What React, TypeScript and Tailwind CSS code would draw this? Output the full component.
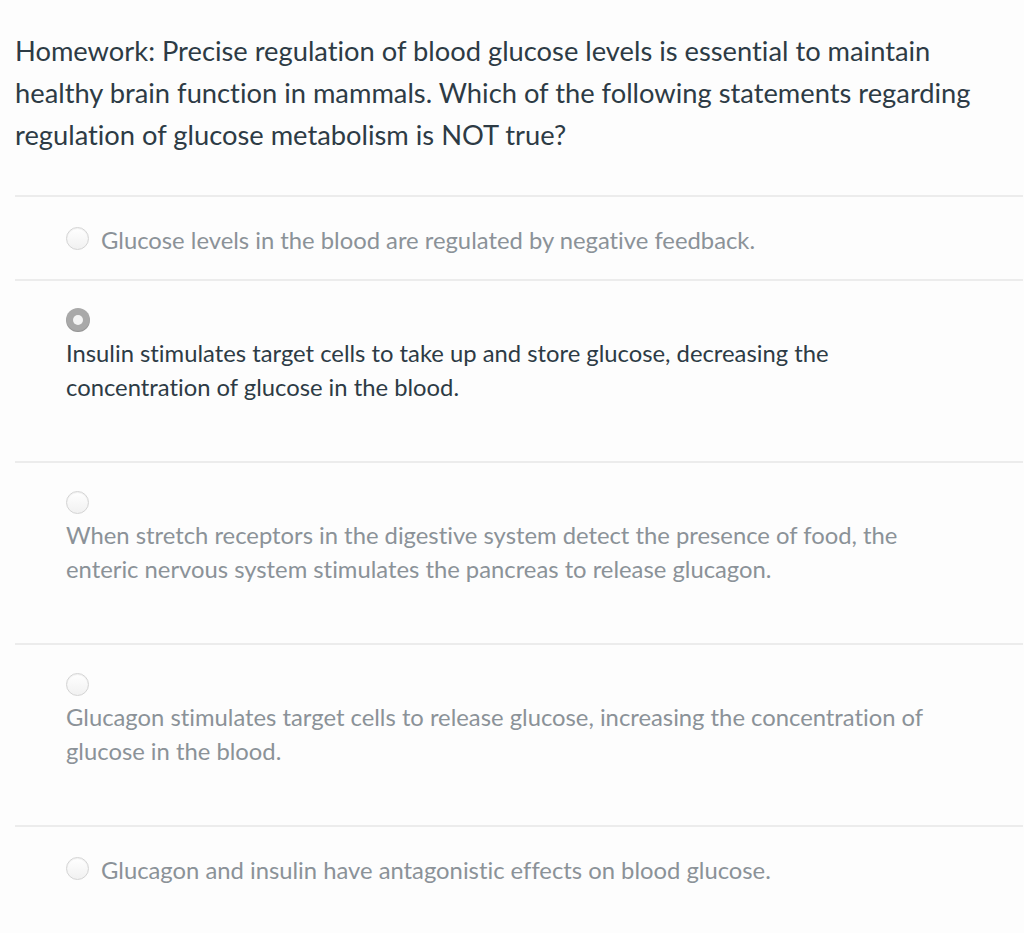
import React from "react";

type Opt = { text: string; stacked: boolean; selected?: boolean };

const options: Opt[] = [
  { text: "Glucose levels in the blood are regulated by negative feedback.", stacked: false },
  {
    text: "Insulin stimulates target cells to take up and store glucose, decreasing the concentration of glucose in the blood.",
    stacked: true,
    selected: true,
  },
  {
    text: "When stretch receptors in the digestive system detect the presence of food, the enteric nervous system stimulates the pancreas to release glucagon.",
    stacked: true,
  },
  {
    text: "Glucagon stimulates target cells to release glucose, increasing the concentration of glucose in the blood.",
    stacked: true,
  },
  { text: "Glucagon and insulin have antagonistic effects on blood glucose.", stacked: false },
];

function Radio({ selected }: { selected?: boolean }) {
  if (selected) {
    return (
      <div className="w-[24px] h-[24px] rounded-full bg-[#a9a9a9] flex items-center justify-center shrink-0 shadow-[inset_0_-1px_1px_rgba(0,0,0,0.15)]">
        <div className="w-[10px] h-[10px] rounded-full bg-[#f4f4f4]" />
      </div>
    );
  }
  return (
    <div className="w-[23px] h-[23px] rounded-full border border-[#d4d4d4] bg-gradient-to-b from-[#ffffff] to-[#f1f1f1] shrink-0 shadow-[inset_0_1px_1px_rgba(0,0,0,0.06)]" />
  );
}

export default function App() {
  return (
    <div
      className="min-h-[933px] w-[1024px] bg-[#fdfdfd] pl-[15px] pr-[1px] pt-[30px] [font-variant-ligatures:none]"
      style={{ fontFamily: "Lato, 'Open Sans', sans-serif" }}
    >
      <div className="w-[985px] text-[27.3px] leading-[42px] text-[#2d3b45] pb-[39px]">
        Homework: Precise regulation of blood glucose levels is essential to maintain healthy brain function in mammals. Which of the following statements regarding regulation of glucose metabolism is NOT true?
      </div>
      {options.map((o, i) => (
        <div key={i} className="border-t-2 border-[#ececec]">
          {o.stacked ? (
            <div className="pl-[51px] pt-[27px] pb-[57px]">
              <div className="h-[24px] flex items-center">
                <Radio selected={o.selected} />
              </div>
              <div
                className={`mt-[4px] w-[875px] text-[23.8px] leading-[34px] ${
                  o.selected ? "text-[#2d3b45]" : "text-[#8b9298]"
                }`}
              >
                {o.text}
              </div>
            </div>
          ) : (
            <div className="pl-[51px] flex items-center gap-[12px] h-[82px]">
              <Radio />
              <div className="text-[23.8px] leading-[34px] text-[#8b9298] mt-[4px]">{o.text}</div>
            </div>
          )}
        </div>
      ))}
    </div>
  );
}
